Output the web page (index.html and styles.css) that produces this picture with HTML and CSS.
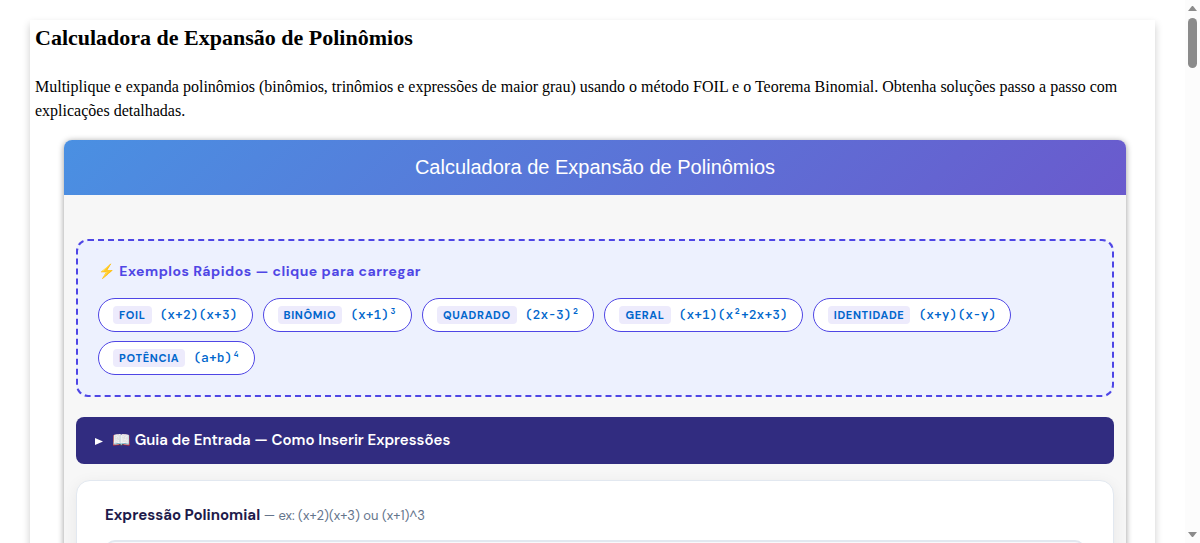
FILE: index.html
```html
<!DOCTYPE html>
<html lang="pt">
<head>
<meta charset="utf-8">
<meta name="viewport" content="width=device-width, initial-scale=1">
<title>Calculadora de Expansão de Polinômios</title>
<link rel="stylesheet" href="styles.css">
</head>
<body>
<main class="page">
  <h1 class="page-title">Calculadora de Expansão de Polinômios</h1>
  <p class="intro">Multiplique e expanda polinômios (binômios, trinômios e expressões de maior grau) usando o método FOIL e o Teorema Binomial. Obtenha soluções passo a passo com explicações detalhadas.</p>
  <section class="calculator">
    <h2 class="calculator-title">Calculadora de Expansão de Polinômios</h2>
    <div class="calculator-body">
      <section class="examples">
        <h3 class="examples-title"><span class="emoji">⚡</span> Exemplos Rápidos — clique para carregar</h3>
        <div class="chips">
          <button class="chip" type="button"><span class="tag">FOIL</span><span>(x+2)(x+3)</span></button>
          <button class="chip" type="button"><span class="tag">BINÔMIO</span><span>(x+1)³</span></button>
          <button class="chip" type="button"><span class="tag">QUADRADO</span><span>(2x-3)²</span></button>
          <button class="chip" type="button"><span class="tag">GERAL</span><span>(x+1)(x²+2x+3)</span></button>
          <button class="chip" type="button"><span class="tag">IDENTIDADE</span><span>(x+y)(x-y)</span></button>
          <button class="chip" type="button"><span class="tag">POTÊNCIA</span><span>(a+b)⁴</span></button>
        </div>
      </section>
      <button class="guide" type="button" aria-expanded="false">
        <svg class="guide-arrow" viewBox="0 0 9 9" aria-hidden="true"><path d="M0 2 8 5.5 0 9Z" fill="currentColor"/></svg>
        <span><span class="emoji">📖</span> Guia de Entrada — Como Inserir Expressões</span>
      </button>
      <section class="card">
        <label class="field-label" for="expression">Expressão Polinomial <span class="hint">— ex: (x+2)(x+3) ou (x+1)^3</span></label>
        <input class="field" id="expression" type="text">
      </section>
    </div>
  </section>
</main>
<div class="scrollbar" aria-hidden="true">
  <svg class="scroll-arrow" viewBox="0 0 9 5"><path d="M0 5 4 0h1l4 5Z" fill="currentColor"/></svg>
  <div class="thumb"></div>
  <svg class="scroll-arrow scroll-down" viewBox="0 0 9 5"><path d="M0 0h9L5 5H4Z" fill="currentColor"/></svg>
</div>
</body>
</html>
```
FILE: styles.css
```css
* { box-sizing: border-box; }
html { height: 100%; overflow: hidden; background: #fff; }
body {
  margin: 0;
  padding: 20px 45px 0 30px;
  color: #000;
  font-family: "Liberation Serif", serif;
}
.page {
  padding: 5px 0 20px 5px;
  background: #fff;
  box-shadow: 0 4px 8px rgba(0, 0, 0, 0.2);
}
.page-title { margin: 0; font-size: 22px; line-height: 26px; }
.intro { margin: 24px 16px 17px 0; font-size: 16px; line-height: 24px; }
.calculator {
  margin: 0 29px;
  background: #f7f7f7;
  border-radius: 8px;
  box-shadow: 0 1px 6px rgba(0, 0, 0, 0.4);
}
.calculator-title {
  margin: 0;
  padding: 14px;
  border-radius: 8px 8px 0 0;
  background: linear-gradient(135deg, #4a90e2, #6a5acd);
  color: #fff;
  font: 400 20px/27px "Liberation Sans", sans-serif;
  text-align: center;
}
.calculator-body {
  padding: 44px 12px 20px;
  font-family: "DM Sans", Inter, sans-serif;
}
.examples {
  padding: 20px;
  border: 2px dashed #4f46e5;
  border-radius: 12px;
  background: #edf1fe;
}
.examples-title {
  margin: 0 0 17px;
  color: #4f46e5;
  font-size: 14px;
  font-weight: 700;
  line-height: 20px;
  letter-spacing: 0.035em;
}
.chips { display: flex; flex-wrap: wrap; gap: 9px 10px; }
.chip {
  display: flex;
  align-items: center;
  gap: 8px;
  padding: 7px 14px;
  border: 1px solid #4f46e5;
  border-radius: 17px;
  background: #fff;
  color: #0066cc;
  font: 500 13px/18px "JetBrains Mono", "DejaVu Sans Mono", monospace;
}
.tag {
  padding: 0 6px;
  border-radius: 4px;
  background: #edebfc;
  font: 700 11px/18px "DM Sans", Inter, sans-serif;
  letter-spacing: 0.06em;
}
.guide {
  display: flex;
  align-items: center;
  gap: 8px;
  width: 100%;
  margin: 20px 0 16px;
  padding: 12px 19px;
  border: 0;
  border-radius: 8px;
  background: #312c80;
  color: #fff;
  font: 600 15px/23px "DM Sans", Inter, sans-serif;
  text-align: left;
}
.guide-arrow { width: 9px; height: 9px; }
.card {
  padding: 24px 28px;
  border: 1px solid #e2e8f0;
  border-radius: 14px;
  background: #fff;
  box-shadow: 0 4px 16px rgba(0, 0, 0, 0.07);
}
.field-label {
  display: block;
  margin-bottom: 14px;
  color: #1e1b4b;
  font-size: 15px;
  font-weight: 700;
  line-height: 21px;
}
.hint { color: #64748b; font-size: 13px; font-weight: 400; }
.field {
  display: block;
  width: 100%;
  height: 50px;
  border: 2px solid #e2e8f0;
  border-radius: 10px;
  background: #f8f9fb;
}
.scrollbar {
  position: fixed;
  top: 0;
  right: 0;
  bottom: 0;
  display: flex;
  flex-direction: column;
  align-items: center;
  width: 15px;
  padding: 6px 0;
  background: #fcfcfc;
  color: #8b8b8b;
}
.scroll-arrow { width: 9px; height: 5px; }
.scroll-down { margin-top: auto; }
.thumb { width: 9px; height: 50px; margin-top: 7px; border-radius: 5px; background: #8b8b8b; }
```
